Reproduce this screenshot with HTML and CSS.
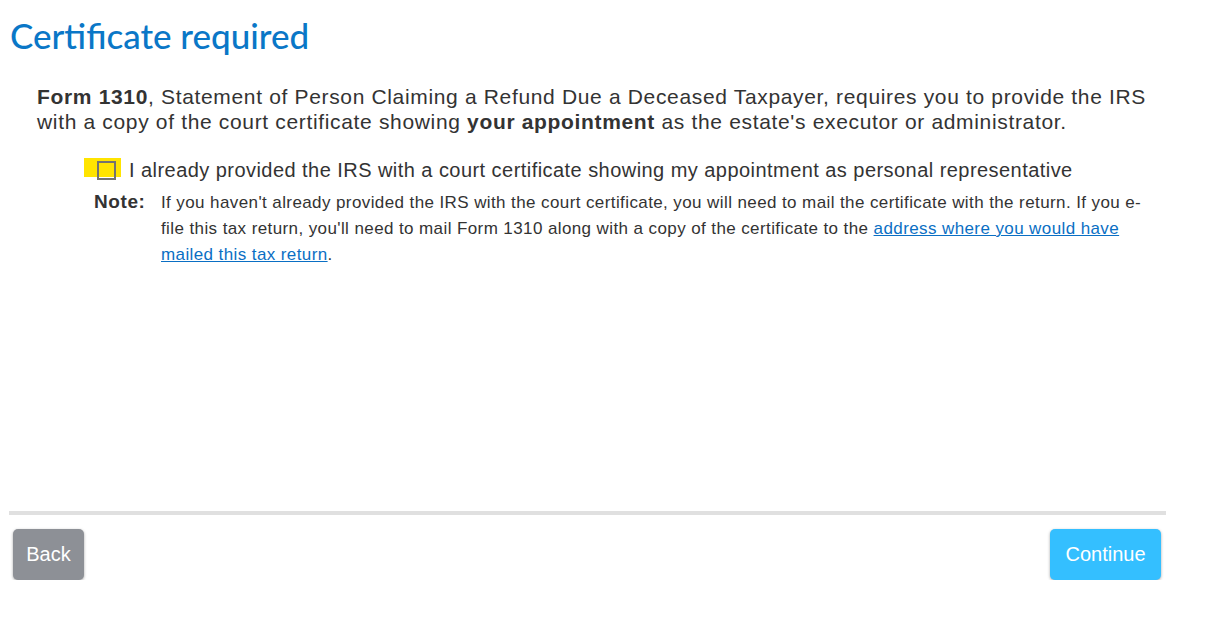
FILE: index.html
```html
<!DOCTYPE html>
<html lang="en">
<head>
    <meta charset="UTF-8">
    <meta name="viewport" content="width=device-width, initial-scale=1.0">
    <title>Certificate required</title>
    <link rel="stylesheet" href="styles.css">
</head>
<body>
    <div class="page">
        <h1 class="title">Certificate required</h1>

        <div class="content">
            <p class="intro">
                <b>Form 1310</b>, Statement of Person Claiming a Refund Due a Deceased Taxpayer, requires you to provide the IRS with a copy of the court certificate showing <b>your appointment</b> as the estate's executor or administrator.
            </p>

            <label class="check-row">
                <span class="highlight"><input type="checkbox" id="provided"></span>
                <span>I already provided the IRS with a court certificate showing my appointment as personal representative</span>
            </label>

            <div class="note">
                <span class="note-label">Note:</span>
                <p class="note-text">If you haven't already provided the IRS with the court certificate, you will need to mail the certificate with the return. If you e-file this tax return, you'll need to mail Form 1310 along with a copy of the certificate to the <a href="#">address where you would have mailed this tax return</a>.</p>
            </div>
        </div>

        <div class="footer">
            <button class="btn btn-back">Back</button>
            <button class="btn btn-continue">Continue</button>
        </div>
    </div>
</body>
</html>
```

FILE: styles.css
```css
body {
    margin: 0;
    font-family: "Liberation Sans", Arial, sans-serif;
    color: #333;
    background-color: #fff;
}
.page {
    width: 1157px;
    padding: 11px 0 0 9px;
}
.title {
    font-family: Lato, "Open Sans", sans-serif;
    font-weight: 500;
    font-size: 35px;
    color: #0a77c7;
    margin: 0 0 0 1px;
    line-height: 48px;
}
.content {
    height: 452px;
    box-sizing: border-box;
    padding-top: 25px;
}
.intro {
    font-size: 21px;
    letter-spacing: 0.66px;
    line-height: 25px;
    margin: 0 0 0 28px;
    width: 1129px;
}
.check-row {
    display: flex;
    align-items: flex-start;
    margin: 24px 0 0 75px;
    font-size: 20px;
    letter-spacing: 0.45px;
    line-height: 24px;
}
.highlight {
    display: inline-flex;
    align-items: flex-start;
    width: 37px;
    height: 19px;
    background-color: #ffe400;
    margin-right: 8px;
}
.highlight input {
    -webkit-appearance: none;
    appearance: none;
    width: 19px;
    height: 19px;
    margin: 3px 0 0 13px;
    border: 2px solid #727272;
    background: transparent;
    box-sizing: border-box;
    flex-shrink: 0;
}
.note {
    display: flex;
    align-items: baseline;
    margin: 7px 0 0 85px;
    font-size: 17px;
    letter-spacing: 0.4px;
    line-height: 26px;
}
.note-label {
    font-weight: bold;
    font-size: 19px;
    letter-spacing: 0.6px;
    width: 67px;
    flex-shrink: 0;
}
.note-text {
    margin: 0;
    width: 998px;
}
.note-text a {
    color: #0a6fc4;
}
.footer {
    border-top: 4px solid #e0e0e0;
    display: flex;
    justify-content: space-between;
    padding: 14px 5px 0 4px;
}
.btn {
    font-family: "Liberation Sans", Arial, sans-serif;
    font-size: 20px;
    color: #fff;
    border: none;
    border-radius: 5px;
    height: 51px;
    padding: 0;
    box-shadow: 0 1px 3px rgba(0, 0, 0, 0.35);
    cursor: pointer;
}
.btn-back {
    background-color: #8d9096;
    width: 71px;
}
.btn-continue {
    background-color: #34bfff;
    width: 111px;
}
```
